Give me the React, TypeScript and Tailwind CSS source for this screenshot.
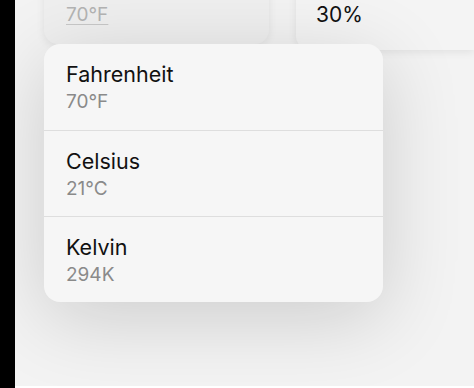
export default function App() {
  const units = [
    { name: 'Fahrenheit', value: '70°F' },
    { name: 'Celsius', value: '21°C' },
    { name: 'Kelvin', value: '294K' },
  ]

  return (
    <div className="w-[474px] h-[388px] flex bg-white overflow-hidden" style={{ fontFamily: 'Inter, "Liberation Sans", sans-serif' }}>
      <div className="w-[15px] h-full bg-black shrink-0" />
      <div className="relative flex-1 h-[386px] bg-[#f3f3f3] overflow-hidden">
        <div className="flex gap-[27px] pl-[29px] -mt-[60px]">
          <div className="w-[225px] h-[104px] rounded-[14px] bg-[#efefef] shadow-[0_2px_8px_rgba(0,0,0,0.08)] flex flex-col justify-end pl-[22px] pb-[20px]">
            <span className="text-[19px] leading-none text-[#b4b4b4] underline decoration-[#c8c8c8] underline-offset-[3px]">70°F</span>
          </div>
          <div className="flex-1 h-[110px] rounded-l-[14px] bg-[#f4f4f4] shadow-[0_2px_8px_rgba(0,0,0,0.08)] flex flex-col justify-end pl-[20px] pb-[25px]">
            <span className="text-[21px] leading-none text-[#111]">30%</span>
          </div>
        </div>

        <div className="absolute left-[29px] top-[44px] w-[339px] rounded-[16px] bg-[#f6f6f6] shadow-[0_16px_80px_rgba(0,0,0,0.16)] overflow-hidden">
          {units.map((u, i) => (
            <div key={u.name} className={`h-[86px] pl-[22px] pt-[17px] ${i > 0 ? 'border-t border-[#dedede]' : ''}`}>
              <div className="text-[21.5px] leading-[26px] text-[#111]">{u.name}</div>
              <div className="text-[19px] leading-[26px] text-[#8a8a8a] mt-[2px]">{u.value}</div>
            </div>
          ))}
        </div>
      </div>
    </div>
  )
}
